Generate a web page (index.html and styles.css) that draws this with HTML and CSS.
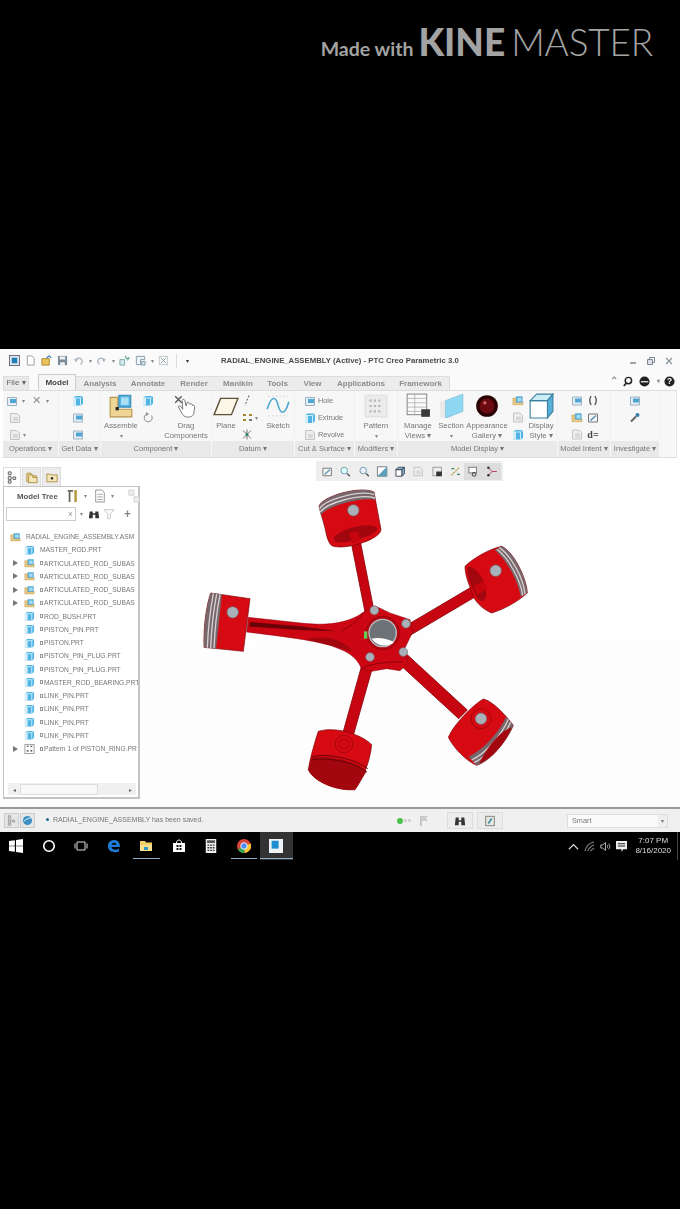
FILE: index.html
```html
<!DOCTYPE html>
<html lang="en">
<head>
<meta charset="utf-8">
<title>RADIAL_ENGINE_ASSEMBLY</title>
<link rel="stylesheet" href="styles.css">
</head>
<body>
<svg class="defs" aria-hidden="true">
  <symbol id="part" viewBox="0 0 12 12"><path d="M1 3.500 3.500 1.500H11V9L9 11H1Z" fill="#4fb4e4"/><path d="M1 3.500H8.500L11 1.500M8.500 3.500V11" fill="none" stroke="#cdeefc"/><path d="M1 3.500H4V11H1Z" fill="#d5edf7"/></symbol>
  <symbol id="asm" viewBox="0 0 14 12"><path d="M1 3H5V8H13V11H1Z" fill="#e6c884" stroke="#b89648" stroke-width=".5"/><path d="M5 1.500H12V8H5Z" fill="#58b6e2" stroke="#3c8cb8" stroke-width=".5"/><path d="M6.500 3H11V7H6.500Z" fill="#a6dcf5"/></symbol>
  <symbol id="sq" viewBox="0 0 12 12"><path d="M1.500 2.500H10.500V10.500H1.500Z" fill="#e8eef2" stroke="#9ab2c2"/><path d="M4 4H10V8H4Z" fill="#4fa6d6"/></symbol>
  <symbol id="fade" viewBox="0 0 12 12"><path d="M1.500 1.500H8L10.500 4V10.500H1.500Z" fill="#eee" stroke="#c4c4c4"/><path d="M4 5H9V9H4Z" fill="#d8d8d8"/></symbol>
  <symbol id="view" viewBox="0 0 12 12"><path d="M1.500 2.500H10.500V10.500H1.500Z" fill="#f6f6f6" stroke="#777"/><path d="M3.500 9 9 4" stroke="#4d8fae" stroke-width="1.400"/></symbol>
</svg>

<header class="top">
  <p class="mark"><span class="made">Made with</span><b class="kine">KINE</b><span class="master">MASTER</span></p>
</header>

<main class="app">
  <div class="titlebar">
    <div class="qa">
      <svg class="q q-app" viewBox="0 0 12 12"><rect x=".5" y=".5" width="11" height="11" fill="#dfe7ee" stroke="#667"/><rect x="3" y="3" width="6" height="6" fill="#1f7fb8"/></svg>
      <svg class="q" viewBox="0 0 12 12"><path d="M2.500 1H7.500L10 3.500V11H2.500Z" fill="#fff" stroke="#9a9a9a"/></svg>
      <svg class="q" viewBox="0 0 12 12"><path d="M1 4H9V11H1Z" fill="#e9c25c" stroke="#a98728"/><path d="M6 3 9 1 11 3" fill="none" stroke="#3a7bb5" stroke-width="1.300"/></svg>
      <svg class="q" viewBox="0 0 12 12"><path d="M1 1H11V11H1Z" fill="#7d8b98"/><path d="M3 1.500H9V5H3ZM3.500 8H8.500V11H3.500Z" fill="#eef1f4"/></svg>
      <svg class="q" viewBox="0 0 12 12"><path d="M3 7A3.500 3.500 0 1 1 8 10" fill="none" stroke="#a8b4be" stroke-width="1.300"/><path d="M1 4 3.500 7.500 5.500 5Z" fill="#a8b4be"/></svg>
      <span class="c">▾</span>
      <svg class="q" viewBox="0 0 12 12"><path d="M9 7A3.500 3.500 0 1 0 4 10" fill="none" stroke="#a8b4be" stroke-width="1.300"/><path d="M11 4 8.500 7.500 6.500 5Z" fill="#a8b4be"/></svg>
      <span class="c">▾</span>
      <svg class="q" viewBox="0 0 12 12"><path d="M1 5H6V11H1Z" fill="#d8e8ef" stroke="#7aa"/><path d="M7 1 8 4 11 3 9 6" fill="none" stroke="#2f8a62"/></svg>
      <svg class="q" viewBox="0 0 12 12"><path d="M1.500 1.500H10.500V5H6V10.500H1.500Z" fill="#eef4f7" stroke="#7f9aa8"/><path d="M7 7H11V11H7Z" fill="#cfe0e8" stroke="#7f9aa8"/></svg>
      <span class="c">▾</span>
      <svg class="q" viewBox="0 0 12 12"><path d="M3 3 9 9M9 3 3 9" stroke="#8d9aa3"/><rect x="1.500" y="1.500" width="9" height="9" fill="none" stroke="#c2c8cc"/></svg>
      <span class="sep"></span>
      <span class="c dark">▾</span>
    </div>
    <h1 class="doc">RADIAL_ENGINE_ASSEMBLY (Active) - PTC Creo Parametric 3.0</h1>
    <div class="win">
      <svg viewBox="0 0 10 10"><path d="M2 7H8" stroke="#7d8890" stroke-width="1.500"/></svg>
      <svg viewBox="0 0 10 10"><path d="M1.500 3.500H6.500V8.500H1.500Z" fill="#dde" stroke="#7d8890"/><path d="M3.500 3V1.500H8.500V6.500H7" fill="none" stroke="#7d8890"/></svg>
      <svg viewBox="0 0 10 10"><path d="M2 2 8 8M8 2 2 8" stroke="#8a949b" stroke-width="1.200"/></svg>
    </div>
  </div>

  <nav class="tabs">
    <span class="file">File ▾</span>
    <span class="tab active">Model</span>
    <span class="tab t-1">Analysis</span>
    <span class="tab t-2">Annotate</span>
    <span class="tab t-3">Render</span>
    <span class="tab t-4">Manikin</span>
    <span class="tab t-5">Tools</span>
    <span class="tab t-6">View</span>
    <span class="tab t-7">Applications</span>
    <span class="tab t-8">Framework</span>
    <div class="help">
      <span class="up">⌃</span>
      <svg class="h-s" viewBox="0 0 12 12"><circle cx="7" cy="5" r="3.500" fill="none" stroke="#222" stroke-width="1.600"/><path d="M4.500 8 2 11" stroke="#222" stroke-width="1.800"/></svg>
      <svg class="h-c" viewBox="0 0 12 12"><circle cx="6" cy="6" r="5.500" fill="#222"/><path d="M2 5.500H10V7H2Z" fill="#ddd"/></svg>
      <span class="c">▾</span>
      <svg viewBox="0 0 12 12"><circle cx="6" cy="6" r="5.500" fill="#222"/><text x="6" y="9" class="qm">?</text></svg>
    </div>
  </nav>

  <section class="ribbon">
    <div class="grp g-ops">
      <div class="body">
        <div class="stack">
          <span class="row"><svg class="s"><use href="#sq"/></svg><span class="c c-a">▾</span><span class="x">✕</span><span class="c c-b">▾</span></span>
          <span class="row"><svg class="s s-in"><use href="#fade"/></svg></span>
          <span class="row"><svg class="s s-in"><use href="#fade"/></svg><span class="c">▾</span></span>
        </div>
      </div>
      <div class="lab">Operations ▾</div>
    </div>
    <div class="grp g-data">
      <div class="body center">
        <div class="stack">
          <svg class="s"><use href="#part"/></svg>
          <svg class="s"><use href="#sq"/></svg>
          <svg class="s"><use href="#sq"/></svg>
        </div>
      </div>
      <div class="lab">Get Data ▾</div>
    </div>
    <div class="grp g-comp">
      <div class="body">
        <div class="tool w-40">
          <svg class="big" viewBox="0 0 24 24"><path d="M2 4H9V15H22V22H2Z" fill="#efd596" stroke="#b5934a"/><path d="M10 2H21V13H10Z" fill="#55b4e4" stroke="#3886b2"/><path d="M12 4H19V11H12Z" fill="#a9def7"/><rect x="7" y="13" width="3" height="3" fill="#222"/></svg>
          <span class="t">Assemble</span><span class="c">▾</span>
        </div>
        <div class="stack narrow">
          <svg class="s"><use href="#part"/></svg>
          <svg class="s" viewBox="0 0 12 12"><path d="M9.500 4A4 4 0 1 1 5 2.500" fill="none" stroke="#8d8d8d"/><path d="M4 .5V4.500L7 2.500Z" fill="#8d8d8d"/></svg>
        </div>
        <div class="tool w-50">
          <svg class="big" viewBox="0 0 24 24"><path d="M2 3 8 9M8 3 2 9" stroke="#555" stroke-width="1.200"/><path d="M9 20 5 13C5 11.500 6.500 11.500 7.500 13L9 15 8.500 7C8.500 5.500 10.500 5.500 11 7L12 12 13 9C14 8 15 8.500 15 10L15.500 10.500C16.500 9.500 18 10 18 11.500 19 11 20 11.500 20 13L19 20C17 23 11 23 9 20Z" fill="#fff" stroke="#666" stroke-width=".8"/></svg>
          <span class="t">Drag</span><span class="t">Components</span>
        </div>
      </div>
      <div class="lab">Component ▾</div>
    </div>
    <div class="grp g-datum">
      <div class="body">
        <div class="tool w-26">
          <svg class="big" viewBox="0 0 24 24"><path d="M7 5H23L17 20H1Z" fill="#fbf6e7" stroke="#5d5238" stroke-width="1.300"/></svg>
          <span class="t">Plane</span>
        </div>
        <div class="stack narrow">
          <svg class="s" viewBox="0 0 12 12"><path d="M8 1 4 11" stroke="#555" stroke-dasharray="2 1.500"/></svg>
          <span class="row"><svg class="s" viewBox="0 0 12 12"><path d="M2 3H5M2 8H5M8 3H11" stroke="#a9812a" stroke-width="2"/><path d="M8 8H11" stroke="#777" stroke-width="2"/></svg><span class="c">▾</span></span>
          <svg class="s" viewBox="0 0 12 12"><path d="M2 2 10 10M10 2 2 10M6 1V11" stroke="#777"/><circle cx="6" cy="6" r="1.500" fill="#2e8a64"/></svg>
        </div>
        <div class="tool w-30">
          <svg class="big" viewBox="0 0 24 24"><path d="M3 3H21M3 21H21" stroke="#d5d5d5" stroke-dasharray="1.500 2"/><path d="M2 15C6 2 10 3 12 11 14 19 18 22 22 8" fill="none" stroke="#4ea8cc" stroke-width="1.500"/></svg>
          <span class="t">Sketch</span>
        </div>
      </div>
      <div class="lab">Datum ▾</div>
    </div>
    <div class="grp g-cut">
      <div class="body">
        <div class="stack list">
          <span class="row"><svg class="s"><use href="#sq"/></svg><span class="t">Hole</span></span>
          <span class="row"><svg class="s"><use href="#part"/></svg><span class="t">Extrude</span></span>
          <span class="row"><svg class="s"><use href="#fade"/></svg><span class="t">Revolve</span></span>
        </div>
      </div>
      <div class="lab">Cut &amp; Surface ▾</div>
    </div>
    <div class="grp g-mod">
      <div class="body center">
        <div class="tool w-40">
          <svg class="big" viewBox="0 0 24 24"><rect x="2" y="2" width="20" height="20" fill="#ececec" stroke="#ddd"/><path d="M6 7H18M6 12H18M6 17H18" stroke="#b5b5b5" stroke-width="2" stroke-dasharray="2 2"/></svg>
          <span class="t">Pattern</span><span class="c">▾</span>
        </div>
      </div>
      <div class="lab">Modifiers ▾</div>
    </div>
    <div class="grp g-disp">
      <div class="body">
        <div class="tool w-36">
          <svg class="big" viewBox="0 0 24 24"><rect x="2" y="1" width="18" height="19" fill="#fafafa" stroke="#8d8d8d"/><path d="M2 5H20M2 9H20M2 13H20M2 17H20M9 1V20" stroke="#a8a8a8" stroke-width=".7"/><rect x="15" y="15" width="8" height="7" fill="#3a3a3a"/></svg>
          <span class="t">Manage</span><span class="t">Views ▾</span>
        </div>
        <div class="tool w-33">
          <svg class="big" viewBox="0 0 24 24"><path d="M2 7 14 7V23H2Z" fill="#e9e9e9"/><path d="M7 7 23 1V17L7 23Z" fill="#8fd7f3" stroke="#6cb8d8" stroke-width=".5"/></svg>
          <span class="t">Section</span><span class="c">▾</span>
        </div>
        <div class="tool w-40">
          <svg class="big" viewBox="0 0 24 24"><circle cx="12" cy="12" r="10" fill="#2a0204"/><circle cx="12" cy="12" r="7" fill="#6b0a10"/><circle cx="10" cy="9" r="1.500" fill="#d26a6a"/></svg>
          <span class="t">Appearance</span><span class="t">Gallery ▾</span>
        </div>
        <div class="stack narrow">
          <svg class="s"><use href="#asm"/></svg>
          <svg class="s"><use href="#fade"/></svg>
          <svg class="s"><use href="#part"/></svg>
        </div>
        <div class="tool w-30">
          <svg class="big" viewBox="0 0 24 24"><path d="M2 7H18V23H2Z" fill="#fff" stroke="#3b7f9c"/><path d="M2 7 8 1H23L18 7Z" fill="#ccecf8" stroke="#3b7f9c"/><path d="M18 7 23 1V17L18 23Z" fill="#57b0d6" stroke="#3b7f9c"/></svg>
          <span class="t">Display</span><span class="t">Style ▾</span>
        </div>
      </div>
      <div class="lab">Model Display ▾</div>
    </div>
    <div class="grp g-intent">
      <div class="body">
        <div class="stack narrow">
          <svg class="s"><use href="#sq"/></svg>
          <svg class="s"><use href="#asm"/></svg>
          <svg class="s"><use href="#fade"/></svg>
        </div>
        <div class="stack narrow">
          <span class="glyph">( )</span>
          <svg class="s"><use href="#view"/></svg>
          <span class="glyph serif">d=</span>
        </div>
      </div>
      <div class="lab">Model Intent ▾</div>
    </div>
    <div class="grp g-inv">
      <div class="body center top-align">
        <div class="stack">
          <svg class="s"><use href="#sq"/></svg>
          <svg class="s" viewBox="0 0 12 12"><path d="M2 10 7 5" stroke="#666" stroke-width="2"/><circle cx="8.500" cy="3.500" r="2" fill="#3a7ea8"/></svg>
        </div>
      </div>
      <div class="lab">Investigate ▾</div>
    </div>
  </section>

  <section class="canvas">
    <aside class="side">
      <div class="sidetabs">
        <span class="stab on"><svg viewBox="0 0 12 14"><path d="M2 1H5V4H2ZM2 6H5V9H2ZM2 10.500H5V13H2ZM7 6.500H10V9H7Z" fill="none" stroke="#555"/></svg></span>
        <span class="stab"><svg viewBox="0 0 14 14"><path d="M1 2H6V5H12V12H1Z" fill="#f2dc9a" stroke="#a58b3e"/><path d="M3 4H8V7H13V13H3Z" fill="#f6e6b5" stroke="#a58b3e"/></svg></span>
        <span class="stab"><svg viewBox="0 0 14 14"><path d="M1 3H5L6 4H13V12H1Z" fill="#f5e6b8" stroke="#a58b3e"/><circle cx="7" cy="8" r="1.500" fill="#333"/></svg></span>
      </div>
      <div class="panel">
        <div class="phead">
          <span class="ptitle">Model Tree</span>
          <svg class="hi" viewBox="0 0 14 16"><path d="M1 2H7M3 2V15" stroke="#665" stroke-width="2"/><path d="M10 1V15" stroke="#b89a45" stroke-width="3"/></svg>
          <span class="c">▾</span>
          <svg class="hi" viewBox="0 0 14 16"><path d="M2 1H9L12 4V15H2Z" fill="#fff" stroke="#888"/><path d="M4 6H10M4 9H10M4 12H10" stroke="#999"/></svg>
          <span class="c">▾</span>
          <svg class="hi faded" viewBox="0 0 14 16"><path d="M1 1H7V7H1ZM7 9H13V15H7Z" fill="#eee" stroke="#ccc"/></svg>
        </div>
        <div class="psearch">
          <span class="input">×</span>
          <span class="c">▾</span>
          <svg class="hi" viewBox="0 0 14 14"><path d="M2 4H5.500V6H8.500V4H12L13 12H8.500V8H5.500V12H1Z" fill="#333"/></svg>
          <svg class="hi" viewBox="0 0 14 14"><path d="M1 2H13L8.500 7V12L5.500 13V7Z" fill="#fafafa" stroke="#c4c4c4"/></svg>
          <span class="plus">+</span>
        </div>
        <ul class="tree">
          <li class="root"><svg class="ti"><use href="#asm"/></svg>RADIAL_ENGINE_ASSEMBLY.ASM</li>
          <li><svg class="ti"><use href="#part"/></svg>MASTER_ROD.PRT</li>
          <li class="exp"><svg class="ti"><use href="#asm"/></svg><i class="m"></i>ARTICULATED_ROD_SUBAS</li>
          <li class="exp"><svg class="ti"><use href="#asm"/></svg><i class="m"></i>ARTICULATED_ROD_SUBAS</li>
          <li class="exp"><svg class="ti"><use href="#asm"/></svg><i class="m"></i>ARTICULATED_ROD_SUBAS</li>
          <li class="exp"><svg class="ti"><use href="#asm"/></svg><i class="m"></i>ARTICULATED_ROD_SUBAS</li>
          <li><svg class="ti"><use href="#part"/></svg><i class="m"></i>ROD_BUSH.PRT</li>
          <li><svg class="ti"><use href="#part"/></svg><i class="m"></i>PISTON_PIN.PRT</li>
          <li><svg class="ti"><use href="#part"/></svg><i class="m"></i>PISTON.PRT</li>
          <li><svg class="ti"><use href="#part"/></svg><i class="m"></i>PISTON_PIN_PLUG.PRT</li>
          <li><svg class="ti"><use href="#part"/></svg><i class="m"></i>PISTON_PIN_PLUG.PRT</li>
          <li><svg class="ti"><use href="#part"/></svg><i class="m"></i>MASTER_ROD_BEARING.PRT</li>
          <li><svg class="ti"><use href="#part"/></svg><i class="m"></i>LINK_PIN.PRT</li>
          <li><svg class="ti"><use href="#part"/></svg><i class="m"></i>LINK_PIN.PRT</li>
          <li><svg class="ti"><use href="#part"/></svg><i class="m"></i>LINK_PIN.PRT</li>
          <li><svg class="ti"><use href="#part"/></svg><i class="m"></i>LINK_PIN.PRT</li>
          <li class="exp"><svg class="ti" viewBox="0 0 12 12"><rect x="1" y="1" width="10" height="10" fill="#fff" stroke="#999"/><path d="M3 3H5M7 3H9M3 8H5M7 8H9" stroke="#333" stroke-width="1.300"/></svg><i class="m"></i>Pattern 1 of PISTON_RING.PR</li>
        </ul>
        <div class="hscroll"><span class="arr">◂</span><span class="thumb"></span><span class="arr end">▸</span></div>
      </div>
    </aside>

    <div class="viewbar">
      <svg viewBox="0 0 12 12"><use href="#view"/></svg>
      <svg viewBox="0 0 12 12"><circle cx="5" cy="5" r="3.500" fill="#dff" stroke="#6a9aa8"/><path d="M8 8 11 11" stroke="#555" stroke-width="1.500"/></svg>
      <svg viewBox="0 0 12 12"><circle cx="5" cy="5" r="3.500" fill="#eef" stroke="#6a9aa8"/><path d="M8 8 11 11" stroke="#555" stroke-width="1.500"/></svg>
      <svg viewBox="0 0 12 12"><path d="M1 11V1H11V11Z" fill="#fff" stroke="#777"/><path d="M1 11 11 1V11Z" fill="#5aa0bd"/></svg>
      <svg viewBox="0 0 12 12"><path d="M1.500 4H8V11H1.500Z" fill="#fff" stroke="#445"/><path d="M1.500 4 4 1.500H10.500L8 4ZM8 4 10.500 1.500V8.500L8 11Z" fill="#7fc0da" stroke="#445"/></svg>
      <svg viewBox="0 0 12 12"><use href="#fade"/></svg>
      <svg viewBox="0 0 12 12"><rect x="1.500" y="1.500" width="9" height="9" fill="#eee" stroke="#999"/><rect x="5" y="6" width="6" height="5" fill="#333"/></svg>
      <svg viewBox="0 0 12 12"><path d="M2 10 10 2" stroke="#b89a45" stroke-width="1.300" stroke-dasharray="2 1"/><path d="M2 3H5M8 9H11" stroke="#2e8a64" stroke-width="1.300"/></svg>
      <svg class="on" viewBox="0 0 12 12"><rect x="1.500" y="1.500" width="8" height="6" fill="#fff" stroke="#777"/><circle cx="7" cy="9" r="2" fill="none" stroke="#333"/></svg>
      <svg class="on" viewBox="0 0 12 12"><path d="M2 2 6 6 2 10M6 6H11" fill="none" stroke="#b03a5a"/><circle cx="2" cy="2" r="1.300" fill="#333"/><circle cx="2" cy="10" r="1.300" fill="#333"/></svg>
    </div>

    <svg class="model" viewBox="0 0 1050 960" role="img" aria-label="Radial engine assembly">
      <!-- rods, starting inside the hub so they join it -->
      <g class="rods">
        <path d="M478 165 505 160 558 428 531 432Z"/>
        <path d="M611 465 873 310 892 335 630 490Z"/>
        <path d="M633 513 832 696 806 722 607 539Z"/>
        <path d="M518 552 550 560 490 772 460 760Z"/>
      </g>
      <!-- hub and master rod -->
      <path class="hub" d="M175 418 340 436C400 442 470 440 520 403L556 384 600 405 660 425 668 462 640 520 655 555 630 578 590 572 545 580 515 572C495 530 470 520 420 502 360 484 250 472 170 462Z"/>
      <path class="dark" d="M180 432 330 445 440 460 330 456 178 446Z"/>
      <path class="shade" d="M350 484C390 476 440 470 490 520 470 516 430 505 350 484Z"/>
      <path class="edge" d="M515 572C540 555 610 550 640 552M520 403C505 430 480 445 455 458"/>
      <circle class="ring" cx="578" cy="465" r="50"/>
      <circle class="bore" cx="578" cy="465" r="41"/>
      <path class="white" d="M545 482C565 510 600 505 612 492 590 480 560 478 545 482Z"/>
      <path class="green" d="M522 460H532V482H522Z"/>
      <g class="pin">
        <circle cx="553" cy="397" r="13"/><circle cx="648" cy="437" r="13"/><circle cx="640" cy="522" r="13"/><circle cx="540" cy="537" r="13"/>
      </g>
      <!-- top piston -->
      <path class="pbody" d="M387 85C395 55 510 22 552 42L573 155C570 185 470 215 430 205 415 200 410 175 405 150Z"/>
      <path class="band" d="M387 85C395 55 510 22 552 42L557 66C520 56 420 80 392 110Z"/>
      <path class="lines" d="M389 92C405 65 510 35 553 50M391 102C410 75 510 45 555 60"/>
      <path class="shade" d="M432 178C455 148 545 130 562 150 565 172 470 198 438 192 433 190 431 184 432 178Z"/>
      <path class="rods-cap" d="M478 165 505 160 512 190 486 195Z"/>
      <circle class="pin" cx="490" cy="97" r="17"/>
      <!-- right piston -->
      <path class="pbody" d="M825 265C850 240 900 212 935 205 970 220 1010 300 1012 345 985 370 940 395 905 405 880 395 850 370 845 340 835 315 825 290 825 265Z"/>
      <path class="band" d="M935 205C970 220 1010 300 1012 345L992 356C985 310 950 245 914 216Z"/>
      <path class="lines" d="M928 209C965 235 1000 300 1005 349M921 214C955 240 992 305 998 353"/>
      <path class="shade" d="M832 268C852 260 880 295 888 335 892 362 880 375 868 366 850 350 832 300 832 268Z"/>
      <path class="rods-cap" d="M850 325 880 308 892 332 862 350Z"/>
      <circle class="pin" cx="917" cy="278" r="17"/>
      <!-- left piston -->
      <path class="pbody" d="M62 345 180 362 160 520 42 508C40 440 50 380 62 345Z"/>
      <path class="band" d="M62 345 96 349 78 512 42 508C40 440 50 380 62 345Z"/>
      <path class="lines" d="M70 346C60 400 54 460 52 509M80 348C70 400 64 460 62 510M90 349C80 400 74 460 72 511"/>
      <circle class="pin" cx="128" cy="403" r="17"/>
      <!-- bottom right piston -->
      <path class="pbody" d="M775 778C790 740 850 680 880 663 910 670 950 715 970 742 950 790 900 850 860 862 830 850 790 810 775 778Z"/>
      <path class="band" d="M948 716 970 742C950 790 900 850 860 862L836 836C880 815 930 760 948 716Z"/>
      <path class="lines" d="M955 724C935 770 890 825 845 846M962 732C942 778 897 832 852 854"/>
      <path class="shade" d="M868 856C892 805 930 760 965 748 948 795 902 845 868 856Z"/>
      <circle class="faint" cx="873" cy="722" r="30"/>
      <circle class="pin" cx="873" cy="722" r="17"/>
      <!-- bottom piston -->
      <path class="pbody" d="M385 760C430 745 510 765 545 800 540 850 520 900 495 935 440 940 370 910 355 875 360 840 375 790 385 760Z"/>
      <path class="shade2" d="M365 838C420 830 500 850 530 880L495 935C440 940 370 910 355 875Z"/>
      <path class="lines darkl" d="M367 835C420 825 500 845 533 872M364 846C420 836 500 856 530 882"/>
      <circle class="faint" cx="462" cy="798" r="26"/>
      <circle class="faint" cx="462" cy="798" r="14"/>
    </svg>
  </section>

  <footer class="status">
    <span class="tog"><svg viewBox="0 0 12 14"><path d="M2 1H5V4H2ZM2 6H5V9H2ZM2 10.500H5V13H2ZM7 6.500H10V9H7Z" fill="none" stroke="#888"/></svg></span>
    <span class="tog"><svg viewBox="0 0 12 12"><circle cx="6" cy="6" r="5" fill="#3f8fc4"/><path d="M2 7C5 4 8 3 11 3" stroke="#dff" fill="none"/></svg></span>
    <span class="msg"><i class="dot"></i>RADIAL_ENGINE_ASSEMBLY has been saved.</span>
    <span class="lights"><i class="g"></i><i></i><i></i></span>
    <svg class="flag" viewBox="0 0 10 12"><path d="M2 1V11" stroke="#999"/><path d="M2 1H9L7 3.500 9 6H2Z" fill="#ccc"/></svg>
    <span class="sbtn"><svg viewBox="0 0 14 14"><path d="M2 3H5.500V6H8.500V3H12L13 12H8.500V8H5.500V12H1Z" fill="#333"/></svg></span>
    <span class="sbtn"><svg viewBox="0 0 14 14"><rect x="2" y="1.500" width="10" height="11" fill="#e8e8e0" stroke="#777"/><path d="M5 10 9 4" stroke="#3f8fa8" stroke-width="2"/></svg></span>
    <span class="select"><span>Smart</span><span class="caret">▾</span></span>
  </footer>
</main>

<div class="taskbar">
  <span class="tk tk-w"><svg viewBox="0 0 12 12"><path d="M0 1.800 5 1V5.700H0ZM6 .9 12 0V5.700H6ZM0 6.300H5V11L0 10.200ZM6 6.300H12V12L6 11.100Z" fill="#fff"/></svg></span>
  <span class="tk"><svg viewBox="0 0 12 12"><circle cx="6" cy="6" r="4.500" fill="none" stroke="#fff" stroke-width="1.400"/></svg></span>
  <span class="tk"><svg viewBox="0 0 14 10"><path d="M3 1H11V9H3ZM1 2.500V7.500M13 2.500V7.500" fill="none" stroke="#ddd"/></svg></span>
  <span class="tk"><svg viewBox="0 0 14 14"><path d="M1 7C1 3 4 1 7.500 1 11 1 13 4 13 8H4.500C5 11 9 11.500 12 9.500V12.500C8 14 1 13.500 1 7ZM4.500 5.800H9.500C9.300 3 5 3 4.500 5.800Z" fill="#1d7cd6"/></svg></span>
  <span class="tk run"><svg viewBox="0 0 14 12"><path d="M1 1H6L7 2.500H13V11H1Z" fill="#f4cf67"/><path d="M1 5H13V11H1Z" fill="#f8df8e"/><rect x="5" y="7" width="4" height="3" fill="#2e9ac2"/></svg></span>
  <span class="tk"><svg viewBox="0 0 14 14"><path d="M1 4H13V13H1Z" fill="#fff"/><path d="M4.500 4C4.500 0 9.500 0 9.500 4" fill="none" stroke="#fff"/><path d="M4.500 6H6.500V8H4.500ZM7.500 6H9.500V8H7.500ZM4.500 9H6.500V11H4.500ZM7.500 9H9.500V11H7.500Z" fill="#111"/></svg></span>
  <span class="tk"><svg viewBox="0 0 12 16"><rect width="12" height="16" fill="#eee"/><rect x="1.500" y="1.500" width="9" height="3" fill="#555"/><path d="M2 7H4M5 7H7M8 7H10M2 10H4M5 10H7M8 10H10M2 13H4M5 13H7M8 13H10" stroke="#333" stroke-width="1.500"/></svg></span>
  <span class="tk run"><svg viewBox="0 0 16 16"><circle cx="8" cy="8" r="8" fill="#d9453a"/><path d="M8 8 1 12A8 8 0 0 0 9 16Z" fill="#2fa350"/><path d="M8 8 15.500 5A8 8 0 0 1 9 16Z" fill="#f4c430"/><circle cx="8" cy="8" r="3.700" fill="#4a8cf0" stroke="#fff"/></svg></span>
  <span class="tk run act"><svg viewBox="0 0 16 16"><rect width="16" height="16" fill="#eef3f7"/><rect x="3" y="2" width="8" height="9" fill="#1c8ed0"/></svg></span>
  <div class="tray">
    <svg viewBox="0 0 12 8"><path d="M1 7 6 2 11 7" fill="none" stroke="#ddd" stroke-width="1.300"/></svg>
    <svg viewBox="0 0 12 12"><path d="M1 11C2 6 6 2 11 1M4 11C5 8 7 6 11 4M7 11C8 10 9 9 11 8" fill="none" stroke="#888" stroke-width="1.200"/></svg>
    <svg viewBox="0 0 14 12"><path d="M1 4H3.500L7 1V11L3.500 8H1Z" fill="none" stroke="#ddd"/><path d="M9 4C10 5 10 7 9 8M11 2.500C13 5 13 7 11 9.500" fill="none" stroke="#ddd"/></svg>
    <svg viewBox="0 0 12 12"><path d="M0 0H12V9H8L6 12V9H0Z" fill="#eee"/><path d="M2 3H10M2 5.500H10" stroke="#111"/></svg>
    <span class="clock"><span>7:07 PM</span><span>8/16/2020</span></span>
  </div>
</div>
</body>
</html>
```

FILE: styles.css
```css
* { box-sizing: border-box; }
html, body { margin: 0; height: 100%; }
body { width: 680px; height: 1209px; background: #000; font-family: "Liberation Sans", Arial, sans-serif; overflow: hidden; }
.defs { width: 0; height: 0; position: absolute; }

.top { height: 349px; display: flex; justify-content: flex-end; align-items: flex-start; }
.mark { margin: 18px 27px 0 0; display: flex; align-items: baseline; color: #a3a3a3; font-family: Lato, "Liberation Sans", sans-serif; line-height: 48px; }
.made { font-size: 19.500px; font-weight: 700; margin-right: 5px; }
.kine { font-size: 37px; font-weight: 900; margin-right: 6px; }
.master { font-size: 37px; font-weight: 300; letter-spacing: -.2px; }

.app { height: 483px; background: #fff; display: flex; flex-direction: column; filter: blur(.5px); position: relative; color: #777; }

.titlebar { height: 23px; display: flex; align-items: center; background: #fafafa; padding: 0 3px 0 9px; position: relative; }
.qa { width: 212px; display: flex; align-items: center; gap: 4px; }
.q { width: 11px; height: 11px; flex: none; margin-right: 1px; }
.c { font-size: 6px; color: #888; line-height: 1; }
.c.dark { color: #333; margin-left: 3px; }
.sep { width: 1px; height: 14px; background: #ddd; margin: 0 2px; }
.doc { margin: 0; font-size: 7.750px; font-weight: 700; color: #4a4a4a; white-space: nowrap; flex: none; width: 407px; }
.win { display: flex; gap: 8px; }
.win svg { width: 10px; height: 10px; }

.tabs { height: 18px; display: flex; align-items: stretch; background: #fafafa; font-size: 8px; font-weight: 700; color: #8c8c8c; padding-left: 3px; }
.file { width: 26px; margin: 4px 9px 0 0; background: #e9e9e9; border: 1px solid #ddd; border-bottom: 0; text-align: center; line-height: 12px; font-weight: 400; color: #666; }
.tab { background: #ececec; margin-top: 4px; border-top: 1px solid #ddd; line-height: 13px; text-align: center; white-space: nowrap; }
.tab.active { width: 38px; margin-top: 2px; background: #f6f6f6; border: 1px solid #ccc; border-bottom: 0; color: #444; line-height: 15px; }
.t-1, .t-2 { width: 48px; }
.t-3, .t-4 { width: 44px; }
.t-5, .t-6 { width: 35px; }
.t-7 { width: 62px; }
.t-8 { width: 58px; border-right: 1px solid #ddd; }
.help { margin-left: auto; display: flex; align-items: center; gap: 4px; padding: 0 5px 0 0; }
.help svg { width: 11px; height: 11px; }
.help .h-s { margin-right: 2px; }
.help .h-c { margin-right: 3px; }
.up { color: #999; font-size: 10px; line-height: 10px; }
.qm { font-size: 9px; fill: #fff; text-anchor: middle; font-weight: 700; }

.ribbon { height: 68px; display: flex; margin: 0 3px; background: #f7f7f7; border-top: 1px solid #ddd; border-bottom: 1px solid #ddd; border-right: 1px solid #e6e6e6; }
.grp { display: flex; flex-direction: column; flex: none; }
.body { flex: 1; display: flex; align-items: flex-start; padding-top: 1px; min-height: 0; border-right: 1px solid #f0f0f0; }
.center { justify-content: center; }
.lab { height: 16px; background: #e9e9e9; border-right: 1px solid #f8f8f8; font-size: 7.500px; line-height: 16px; text-align: center; white-space: nowrap; color: #777; }
.g-ops { width: 56px; } .g-ops .body { padding-left: 3px; }
.g-data { width: 42px; } .g-data .body { padding-right: 4px; }
.g-comp { width: 111px; }
.g-datum { width: 83px; }
.g-cut { width: 60px; } .g-cut .body { padding-left: 9px; }
.g-mod { width: 43px; }
.g-disp { width: 160px; } .g-disp .body { padding-left: 2px; }
.g-intent { width: 53px; } .g-intent .body { padding-left: 11px; }
.g-inv { width: 49px; }
.stack { display: flex; flex-direction: column; align-items: flex-start; height: 51px; flex: none; }
.stack > * { height: 17px; flex: none; }
.stack.narrow { align-items: center; width: 20px; }
.g-comp .narrow { width: 14px; }
.g-intent .narrow { width: 16px; }
.g-datum .narrow { width: 14px; align-items: flex-start; margin-left: 1px; }
.g-datum .w-30 { margin-left: 7px; }
.stack.list .t { font-size: 7.300px; }
.row { display: flex; align-items: center; gap: 2px; }
.s { width: 12px; height: 14px; flex: none; }
.s-in { margin-left: 3px; }
.stack > .s { height: 17px; width: 12px; }
.c-a { margin-left: 2px; }
.c-b { margin-left: 3px; }
.x { font-size: 11px; color: #8d8d8d; margin-left: 5px; line-height: 1; }
.tool { display: flex; flex-direction: column; align-items: center; flex: none; }
.big { width: 26px; height: 26px; margin: 1px 0 2px; flex: none; }
.t { font-size: 7.700px; line-height: 10px; white-space: nowrap; color: #777; }
.tool .c { line-height: 10px; }
.w-26 { width: 28px; } .w-30 { width: 32px; } .w-33 { width: 30px; } .w-36 { width: 36px; } .w-40 { width: 40px; } .w-50 { width: 52px; margin-left: 5px; }
.g-disp .w-40 { width: 42px; }
.g-disp .w-30 { width: 26px; }
.glyph { font-size: 9px; line-height: 17px; color: #444; font-weight: 700; }
.serif { font-family: "Liberation Serif", serif; font-size: 10px; }

.canvas { flex: 1; display: flex; align-items: flex-start; position: relative; background: linear-gradient(#fff, #fdfdfd); min-height: 0; }
.side { width: 140px; flex: none; padding: 9px 0 0 3px; }
.sidetabs { display: flex; height: 19px; gap: 1px; }
.stab { width: 19px; background: #ececec; border: 1px solid #ddd; border-bottom: 0; display: flex; align-items: center; justify-content: center; }
.stab.on { background: #fff; width: 18px; }
.stab svg { width: 12px; height: 13px; }
.panel { width: 137px; height: 313px; border: 1px solid #c4c4c4; border-right-width: 2px; border-bottom-width: 2px; background: #fff; display: flex; flex-direction: column; }
.phead { height: 18px; display: flex; align-items: center; padding-left: 13px; gap: 3px; }
.ptitle { font-size: 7.800px; font-weight: 700; color: #555; margin-right: 6px; white-space: nowrap; }
.hi { width: 12px; height: 14px; flex: none; }
.faded { margin-left: 7px; }
.phead .c { margin: 0 4px 0 2px; }
.psearch { height: 17px; display: flex; align-items: center; padding-left: 2px; gap: 3px; }
.input { width: 70px; height: 14px; background: #fff; border: 1px solid #ccc; text-align: right; padding-right: 2px; font-size: 9px; line-height: 12px; color: #999; flex: none; }
.psearch .c { margin: 0 2px 0 1px; }
.plus { font-size: 12px; font-weight: 700; color: #888; margin-left: 6px; line-height: 1; }
.tree { list-style: none; margin: 8px 0 0; padding: 0; flex: 1; overflow: hidden; font-size: 6.700px; color: #777; }
.tree li { height: 13.250px; display: flex; align-items: center; padding-left: 20px; white-space: nowrap; overflow: hidden; position: relative; }
.tree li.root { padding-left: 6px; }
.ti { width: 11px; height: 12px; margin-right: 5px; flex: none; }
.tree li.exp::before { content: ""; position: absolute; left: 9px; top: 3.500px; border-left: 5px solid #777; border-top: 3px solid transparent; border-bottom: 3px solid transparent; }
.m { width: 3px; height: 4px; border: 1px solid #999; margin-right: 1px; flex: none; }
.hscroll { height: 12px; margin: 0 2px 2px 4px; background: #f0f0f0; display: flex; align-items: center; font-size: 6px; color: #666; padding: 0 2px; }
.arr { width: 8px; text-align: center; }
.arr.end { margin-left: auto; }
.thumb { width: 78px; height: 11px; margin-left: 2px; background: #f8f8f8; border: 1px solid #ddd; }

.viewbar { position: absolute; left: 316px; top: 3px; width: 187px; height: 20px; background: #eee; display: flex; align-items: center; padding-left: 2px; }
.viewbar svg { width: 18.300px; height: 17px; padding: 2.500px 3.500px; flex: none; }
.viewbar svg.on { background: #ddd; }

.model { width: 350px; height: 320px; margin: 20px 0 0 50px; flex: none; }
.rods path { fill: #c70510; stroke: #8a030a; stroke-width: 2.500; }
.rods-cap { fill: #c70510; }
.hub { fill: #cc0612; stroke: #8a030a; stroke-width: 1.500; }
.pbody { fill: #d60a12; stroke: #7a0208; stroke-width: 2; }
.band { fill: #77666b; }
.lines { fill: none; stroke: #d6d0d2; stroke-width: 4; }
.lines.darkl { stroke: #6a0207; stroke-width: 3; }
.shade { fill: #a2060e; }
.shade2 { fill: #a20710; }
.dark { fill: #6a0207; }
.edge { fill: none; stroke: #8a030a; stroke-width: 3; }
.ring { fill: #b30510; stroke: #8a030a; stroke-width: 2; }
.bore { fill: #6d7277; stroke: #b9bcc0; stroke-width: 4; }
.white { fill: #fff; }
.green { fill: #5fcf55; }
.pin, .pin circle { fill: #aab0b8; stroke: #70767c; stroke-width: 2; }
.faint { fill: none; stroke: #a8050e; stroke-width: 3; }

.status { height: 25px; flex: none; background: #f0f0f0; border-top: 2px solid #9a9a9a; display: flex; align-items: center; padding: 0 12px 0 4px; position: relative; }
.tog { width: 15px; height: 15px; margin-right: 1px; border: 1px solid #ccc; background: #e6e6e6; display: flex; align-items: center; justify-content: center; flex: none; }
.tog svg { width: 11px; height: 11px; }
.msg { font-size: 7px; color: #777; margin-left: 10px; width: 351px; flex: none; display: flex; align-items: center; margin-top: -2px; white-space: nowrap; }
.dot { width: 3px; height: 3px; border-radius: 50%; background: #1a6a8a; margin-right: 4px; }
.lights { display: flex; align-items: center; gap: 1px; width: 20px; margin-right: 2px; flex: none; }
.lights i { width: 3px; height: 3px; border-radius: 50%; background: #ccc; }
.lights .g { width: 6px; height: 6px; background: #4ac04f; }
.flag { width: 10px; height: 12px; margin-right: 18px; flex: none; }
.sbtn { width: 26px; height: 17px; margin-right: 4px; background: #ececec; border: 1px solid #ddd; display: flex; align-items: center; justify-content: center; flex: none; }
.sbtn svg { width: 12px; height: 12px; }
.select { margin-left: 60px; width: 101px; height: 14px; background: #fafafa; border: 1px solid #ddd; font-size: 7.300px; line-height: 12px; padding-left: 4px; display: flex; justify-content: space-between; flex: none; }
.caret { width: 9px; background: #eee; text-align: center; font-size: 6px; }

.taskbar { height: 28px; display: flex; align-items: stretch; background: #000; }
.tk { width: 32.500px; display: flex; align-items: center; justify-content: center; position: relative; flex: none; }
.tk svg { width: 14px; height: 14px; }
.tk.run::after { content: ""; position: absolute; left: 3px; right: 3px; bottom: 1px; height: 1px; background: #8fb0cc; }
.tk.act { background: #333; }
.tk.act::after { left: 0; right: 0; }
.tray { margin-left: auto; display: flex; align-items: center; gap: 5px; padding-right: 6px; border-right: 1px solid #444; margin-right: 2px; filter: blur(.3px); }
.tray svg { width: 11px; height: 11px; }
.clock { display: flex; flex-direction: column; align-items: center; font-size: 8px; line-height: 10px; color: #ddd; margin-left: 3px; }
```
